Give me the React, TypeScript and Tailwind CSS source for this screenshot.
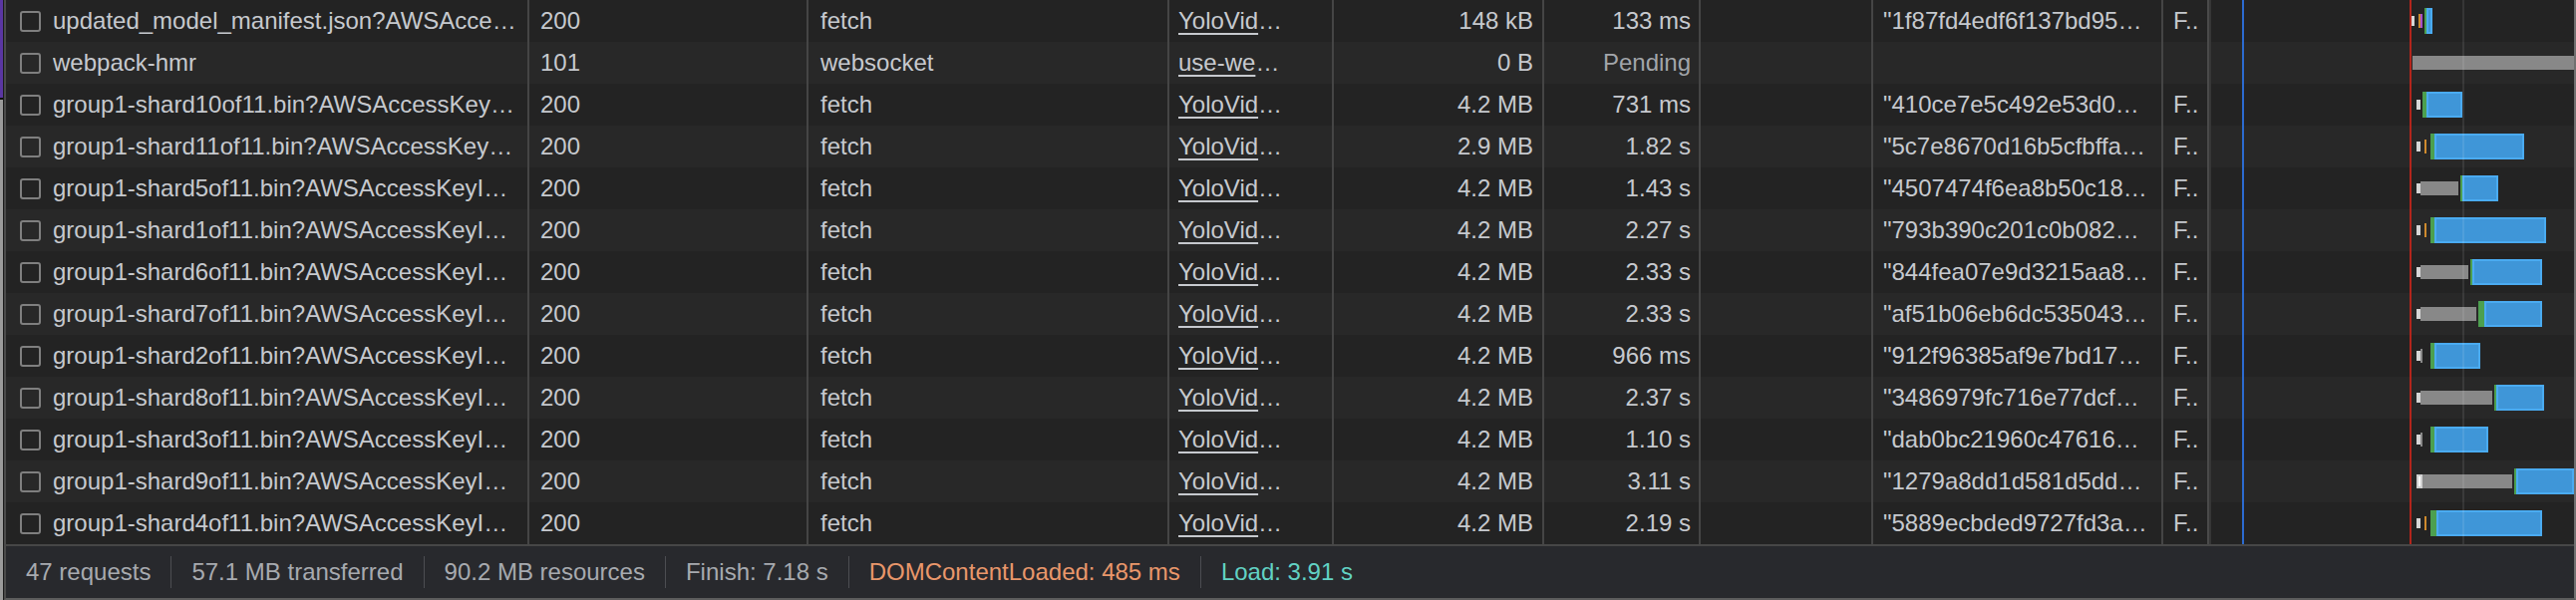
import React from 'react';

type Bar = { x: number; w: number; k: 'w' | 'o' | 'p' | 'g' | 'b' | 'q' | 'W' };

type Row = {
  name: string;
  status: string;
  type: string;
  init: string;
  size: string;
  time: string;
  etag: string;
  pending?: boolean;
  bars: Bar[];
};

const shard = (n: string, tail: string) => `group1-shard${n}of11.bin?AWSAccessKey${tail}…`;

const rows: Row[] = [
  {
    name: 'updated_model_manifest.json?AWSAcce…', status: '200', type: 'fetch', init: 'YoloVid', size: '148 kB', time: '133 ms', etag: '"1f87fd4edf6f137bd95…',
    bars: [{ x: 201, w: 3, k: 'w' }, { x: 208, w: 2, k: 'o' }, { x: 210, w: 2, k: 'p' }, { x: 214, w: 2, k: 'g' }, { x: 216, w: 6, k: 'b' }],
  },
  { name: 'webpack-hmr', status: '101', type: 'websocket', init: 'use-we', size: '0 B', time: 'Pending', etag: '', pending: true, bars: [{ x: 202, w: 162, k: 'q' }] },
  {
    name: shard('10', ''), status: '200', type: 'fetch', init: 'YoloVid', size: '4.2 MB', time: '731 ms', etag: '"410ce7e5c492e53d0…',
    bars: [{ x: 206, w: 4, k: 'w' }, { x: 212, w: 4, k: 'g' }, { x: 216, w: 36, k: 'b' }],
  },
  {
    name: shard('11', ''), status: '200', type: 'fetch', init: 'YoloVid', size: '2.9 MB', time: '1.82 s', etag: '"5c7e8670d16b5cfbffa…',
    bars: [{ x: 206, w: 4, k: 'w' }, { x: 214, w: 2, k: 'o' }, { x: 220, w: 4, k: 'g' }, { x: 224, w: 90, k: 'b' }],
  },
  {
    name: shard('5', 'I'), status: '200', type: 'fetch', init: 'YoloVid', size: '4.2 MB', time: '1.43 s', etag: '"4507474f6ea8b50c18…',
    bars: [{ x: 206, w: 4, k: 'w' }, { x: 210, w: 38, k: 'q' }, { x: 250, w: 2, k: 'g' }, { x: 252, w: 36, k: 'b' }],
  },
  {
    name: shard('1', 'I'), status: '200', type: 'fetch', init: 'YoloVid', size: '4.2 MB', time: '2.27 s', etag: '"793b390c201c0b082…',
    bars: [{ x: 206, w: 4, k: 'w' }, { x: 214, w: 2, k: 'o' }, { x: 220, w: 4, k: 'g' }, { x: 224, w: 112, k: 'b' }],
  },
  {
    name: shard('6', 'I'), status: '200', type: 'fetch', init: 'YoloVid', size: '4.2 MB', time: '2.33 s', etag: '"844fea07e9d3215aa8…',
    bars: [{ x: 206, w: 4, k: 'w' }, { x: 210, w: 48, k: 'q' }, { x: 260, w: 2, k: 'g' }, { x: 262, w: 70, k: 'b' }],
  },
  {
    name: shard('7', 'I'), status: '200', type: 'fetch', init: 'YoloVid', size: '4.2 MB', time: '2.33 s', etag: '"af51b06eb6dc535043…',
    bars: [{ x: 206, w: 4, k: 'w' }, { x: 210, w: 56, k: 'q' }, { x: 268, w: 6, k: 'g' }, { x: 274, w: 58, k: 'b' }],
  },
  {
    name: shard('2', 'I'), status: '200', type: 'fetch', init: 'YoloVid', size: '4.2 MB', time: '966 ms', etag: '"912f96385af9e7bd17…',
    bars: [{ x: 206, w: 4, k: 'w' }, { x: 210, w: 2, k: 'q' }, { x: 220, w: 4, k: 'g' }, { x: 224, w: 46, k: 'b' }],
  },
  {
    name: shard('8', 'I'), status: '200', type: 'fetch', init: 'YoloVid', size: '4.2 MB', time: '2.37 s', etag: '"3486979fc716e77dcf…',
    bars: [{ x: 206, w: 4, k: 'w' }, { x: 210, w: 72, k: 'q' }, { x: 284, w: 2, k: 'g' }, { x: 286, w: 48, k: 'b' }],
  },
  {
    name: shard('3', 'I'), status: '200', type: 'fetch', init: 'YoloVid', size: '4.2 MB', time: '1.10 s', etag: '"dab0bc21960c47616…',
    bars: [{ x: 206, w: 4, k: 'w' }, { x: 210, w: 2, k: 'q' }, { x: 220, w: 4, k: 'g' }, { x: 224, w: 54, k: 'b' }],
  },
  {
    name: shard('9', 'I'), status: '200', type: 'fetch', init: 'YoloVid', size: '4.2 MB', time: '3.11 s', etag: '"1279a8dd1d581d5dd…',
    bars: [{ x: 206, w: 6, k: 'W' }, { x: 212, w: 90, k: 'q' }, { x: 304, w: 2, k: 'g' }, { x: 306, w: 58, k: 'b' }],
  },
  {
    name: shard('4', 'I'), status: '200', type: 'fetch', init: 'YoloVid', size: '4.2 MB', time: '2.19 s', etag: '"5889ecbded9727fd3a…',
    bars: [{ x: 206, w: 4, k: 'w' }, { x: 214, w: 2, k: 'o' }, { x: 220, w: 6, k: 'g' }, { x: 226, w: 106, k: 'b' }],
  },
];

function Waterfall({ bars }: { bars: Bar[] }) {
  return (
    <svg width="364" height="42" viewBox="0 0 364 42" className="block">
      <rect x="31" y="0" width="2" height="42" fill="#2c6bd0" />
      <rect x="199" y="0" width="2" height="42" fill="#b2251c" />
      {bars.map((b, i) => {
        if (b.k === 'w') return <rect key={i} x={b.x} y="16" width={b.w} height="10" fill="#d6d6d6" />;
        if (b.k === 'W')
          return (
            <g key={i}>
              <rect x={b.x} y="14" width={b.w} height="14" fill="#d0d0d0" />
              <rect x={b.x + 2} y="16" width="2" height="10" fill="#ffffff" />
            </g>
          );
        if (b.k === 'o') return <rect key={i} x={b.x} y="14" width={b.w} height="14" fill="#cf8a2e" />;
        if (b.k === 'p') return <rect key={i} x={b.x} y="14" width={b.w} height="14" fill="#a74fc6" />;
        if (b.k === 'q') return <rect key={i} x={b.x} y="14" width={b.w} height="14" fill="#888888" />;
        if (b.k === 'g') return <rect key={i} x={b.x} y="8" width={b.w} height="26" fill="#4c9f4f" />;
        return (
          <g key={i}>
            <rect x={b.x} y="8" width={b.w} height="26" fill="#4aabf1" />
            <rect x={b.x + 2} y="10" width={b.w - 4} height="22" fill="#3f96d8" />
          </g>
        );
      })}
      <rect x="252" y="0" width="2" height="42" fill="rgba(255,255,255,0.09)" />
    </svg>
  );
}

export default function App() {
  return (
    <div
      className="w-[2584px] h-[602px] flex bg-[#232323] text-[24px] text-[#c6c9ce] overflow-hidden"
      style={{ fontFamily: '"Liberation Sans", Arial, sans-serif' }}
    >
      {/* window edge */}
      <div className="w-[3px] flex flex-col">
        <div className="h-[98px] bg-[#5a36a2]" />
        <div className="h-[2px] bg-[#111]" />
        <div className="flex-1 bg-[#9b9b9b]" />
      </div>
      <div className="w-[1px] bg-[#1b1b1b]" />

      <div className="w-[2580px] flex flex-col border-l-2 border-r-2 border-b-2 border-l-[#4a4a4a] border-r-[#707070] border-b-[#5d5d5d]">
        {/* rows */}
        <div className="flex flex-col">
          {rows.map((r, i) => (
            <div key={i} className={`flex h-[42px] items-stretch ${i % 2 === 0 ? 'bg-[#232323]' : 'bg-[#282828]'}`}>
              <div className="w-[525px] flex items-center pl-[14px] pr-[6px] border-r-2 border-[#454545] overflow-hidden whitespace-nowrap">
                <span className="w-[21px] h-[21px] shrink-0 rounded-[3px] border-2 border-[#7f7f7f]" />
                <span className="ml-[12px] overflow-hidden">{r.name}</span>
              </div>
              <div className="w-[280px] flex items-center pl-[11px] border-r-2 border-[#454545]">{r.status}</div>
              <div className="w-[362px] flex items-center pl-[12px] border-r-2 border-[#454545]">{r.type}</div>
              <div className="w-[165px] flex items-center pl-[9px] border-r-2 border-[#454545] whitespace-nowrap">
                <span className="underline decoration-2 underline-offset-[4px]">{r.init}</span>…
              </div>
              <div className="w-[211px] flex items-center justify-end pr-[9px] border-r-2 border-[#454545]">{r.size}</div>
              <div className={`w-[157px] flex items-center justify-end pr-[8px] border-r-2 border-[#454545] ${r.pending ? 'text-[#a2a5aa]' : ''}`}>{r.time}</div>
              <div className="w-[173px] border-r-2 border-[#454545]" />
              <div className="w-[291px] flex items-center pl-[10px] border-r-2 border-[#454545] whitespace-nowrap">{r.etag}</div>
              <div className="w-[44px] flex items-center pl-[10px] whitespace-nowrap">{r.pending ? '' : 'F..'}</div>
              <div className="w-[4px] border-l-2 border-[#4a4a4a] bg-[#363636]" />
              <div className="w-[364px]">
                <Waterfall bars={r.bars} />
              </div>
            </div>
          ))}
        </div>

        {/* summary bar */}
        <div className="flex-1 flex items-center bg-[#28292d] border-t-2 border-[#474747] pl-[20px] text-[#a7aaaf] whitespace-nowrap">
          <span>47 requests</span>
          <span className="mx-[20px] w-[1px] h-[32px] bg-[#4c4d52]" />
          <span>57.1 MB transferred</span>
          <span className="mx-[20px] w-[1px] h-[32px] bg-[#4c4d52]" />
          <span>90.2 MB resources</span>
          <span className="mx-[20px] w-[1px] h-[32px] bg-[#4c4d52]" />
          <span>Finish: 7.18 s</span>
          <span className="mx-[20px] w-[1px] h-[32px] bg-[#4c4d52]" />
          <span className="text-[#e9976b]">DOMContentLoaded: 485 ms</span>
          <span className="mx-[20px] w-[1px] h-[32px] bg-[#4c4d52]" />
          <span className="text-[#62d2c4]">Load: 3.91 s</span>
        </div>
      </div>
    </div>
  );
}
